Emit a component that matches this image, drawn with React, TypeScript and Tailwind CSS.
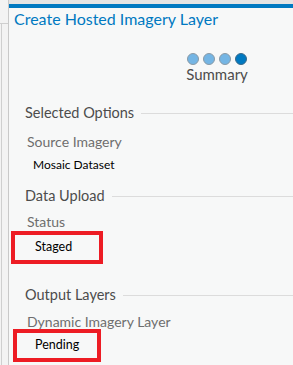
import React from "react";

function SectionHeader({ title }: { title: string }) {
  return (
    <div className="flex items-center gap-[7px] pl-[16px] h-[20px]">
      <span className="text-[14.5px] text-[#4c4c4c] whitespace-nowrap leading-none">{title}</span>
      <div className="flex-1 h-px bg-[#dcdcdc]" />
    </div>
  );
}

export default function App() {
  return (
    <div
      className="w-[293px] h-[365px] bg-[#f7f8f8] flex overflow-hidden"
      style={{ fontFamily: 'Lato, "Open Sans", sans-serif' }}
    >
      <div className="w-[9px] h-full flex flex-col bg-[#f3f3f3] border-r border-[#c9c9c9]">
        <div className="h-[24px] border-b border-[#cfcfcf]" />
        <div className="flex-1 ml-[1px] border-l border-[#cfcfcf]" />
      </div>
      <div className="flex-1 flex flex-col">
        <div className="h-[4px] bg-[#e4e4e4]" />
        <div className="h-[4px] bg-[#0079c1]" />
        <div className="pl-[5px] pt-[1px] text-[16px] leading-[20px] text-[#0079c1] whitespace-nowrap">
          Create Hosted Imagery Layer
        </div>
        <div className="w-[80px] ml-[168px] flex flex-col items-center mt-[24px]">
          <div className="flex gap-[4px]">
            <span className="w-[12px] h-[12px] rounded-full bg-[#74b5e4] border border-[#8a9aa6]" />
            <span className="w-[12px] h-[12px] rounded-full bg-[#74b5e4] border border-[#8a9aa6]" />
            <span className="w-[12px] h-[12px] rounded-full bg-[#74b5e4] border border-[#8a9aa6]" />
            <span className="w-[12px] h-[12px] rounded-full bg-[#0079c1] border border-[#3a6a8a]" />
          </div>
          <div className="text-[15px] leading-[18px] text-[#4c4c4c] mt-[0px]">Summary</div>
        </div>
        <div className="mt-[20px]">
          <SectionHeader title="Selected Options" />
          <div className="pl-[18px] mt-[10px] text-[14px] leading-[18px] text-[#6e6e6e]">Source Imagery</div>
          <div className="pl-[24px] mt-[5px] text-[12px] leading-[18px] text-black">Mosaic Dataset</div>
        </div>
        <div className="mt-[12px]">
          <SectionHeader title="Data Upload" />
          <div className="pl-[18px] mt-[7px] text-[14px] leading-[18px] text-[#6e6e6e]">Status</div>
          <div className="ml-[2px] mt-[0px] w-[92px] h-[33px] border-[4px] border-[#ed1c24] pl-[20px] flex items-center text-[12.5px] text-black">
            Staged
          </div>
        </div>
        <div className="mt-[21px]">
          <SectionHeader title="Output Layers" />
          <div className="pl-[18px] mt-[8px] text-[14px] leading-[18px] text-[#6e6e6e]">Dynamic Imagery Layer</div>
          <div className="ml-[4px] mt-[-2px] w-[88px] h-[33px] border-[4px] border-[#ed1c24] pl-[18px] flex items-center text-[12.5px] text-black">
            Pending
          </div>
        </div>
      </div>
    </div>
  );
}
